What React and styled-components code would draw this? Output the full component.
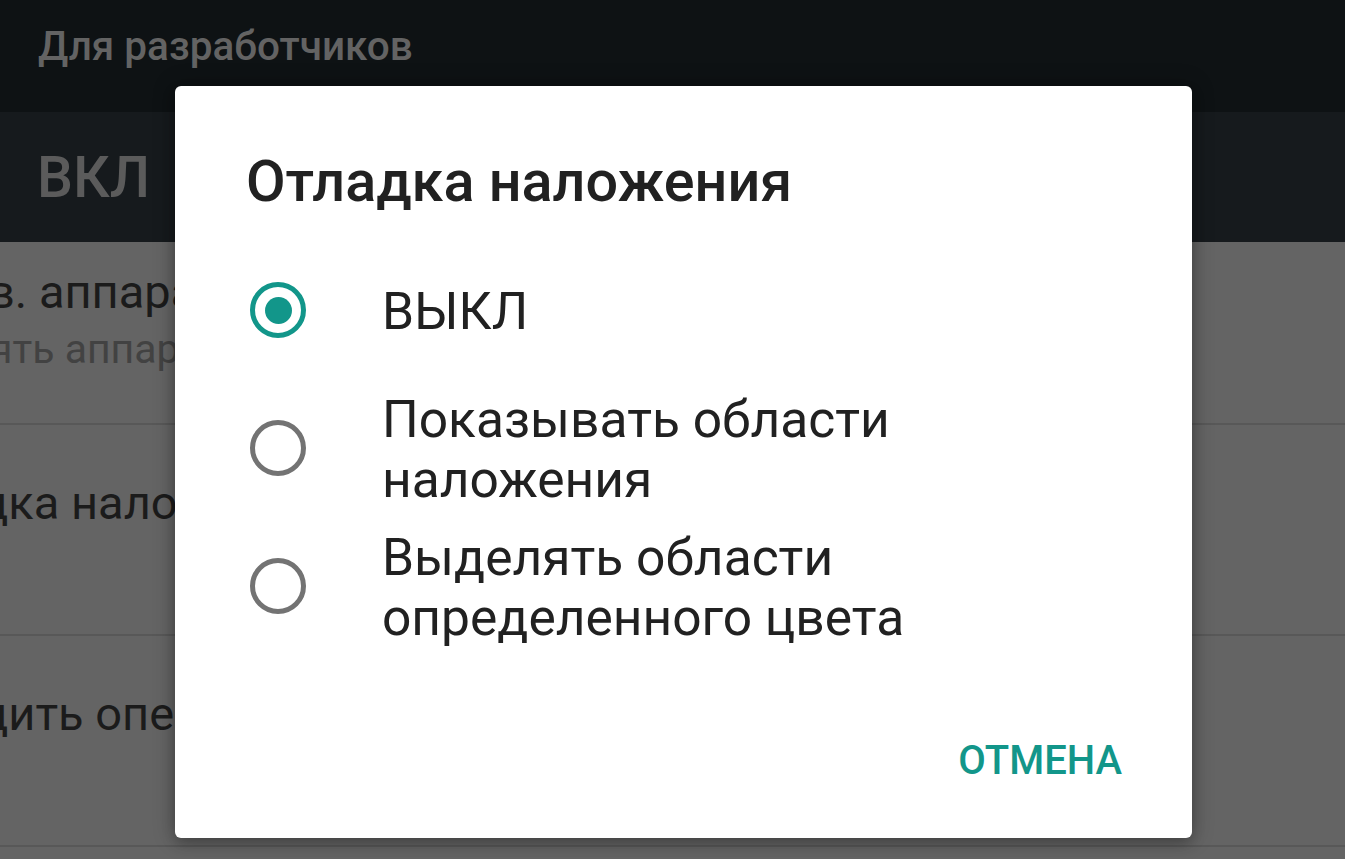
import React from 'react'
import styled, { createGlobalStyle } from 'styled-components'

const GlobalStyle = createGlobalStyle`
  html, body {
    margin: 0;
    padding: 0;
    background: #646464;
  }
  body {
    font-family: Roboto, 'Noto Sans', 'Liberation Sans', sans-serif;
  }
`

const Screen = styled.div`
  position: relative;
  width: 1345px;
  height: 859px;
  overflow: hidden;
  display: flex;
  flex-direction: column;
  background: #646464;
`

const AppBar = styled.header`
  height: 112px;
  flex-shrink: 0;
  background: #0e1214;
  padding: 0 38px;
  box-sizing: border-box;
`

const AppBarTitle = styled.h1`
  margin: 0;
  font-weight: 500;
  font-size: 40.5px;
  line-height: 92px;
  color: #636363;
`

const SwitchBar = styled.div`
  height: 130px;
  flex-shrink: 0;
  background: #161a1d;
  display: flex;
  align-items: center;
  padding: 0 37px;
  box-sizing: border-box;
`

const SwitchLabel = styled.span`
  font-weight: 500;
  font-size: 57px;
  color: #5b5b5b;
`

const Prefs = styled.div`
  flex: 1;
  overflow: hidden;
`

const PrefList = styled.div`
  margin-top: -28px;
`

const Pref = styled.div`
  padding: 49px 0 46px;
  border-bottom: 2px solid #585858;
  white-space: nowrap;
`

const PrefTitle = styled.div`
  font-size: 47px;
  line-height: 58px;
  color: #1b1b1b;
  margin-left: ${p => p.$shift}px;
`

const PrefSummary = styled.div`
  font-size: 41px;
  line-height: 56px;
  min-height: 56px;
  color: #424242;
  margin-left: ${p => p.$shift}px;
`

const Dialog = styled.div`
  position: absolute;
  top: 86px;
  left: 175px;
  width: 1017px;
  height: 752px;
  background: #ffffff;
  border-radius: 6px;
  box-shadow: 0 0 22px rgba(0, 0, 0, 0.28), 0 6px 14px rgba(0, 0, 0, 0.2);
  padding-top: 62px;
  box-sizing: border-box;
  display: flex;
  flex-direction: column;
`

const DialogTitle = styled.h2`
  margin: 0;
  padding: 0 71px;
  font-weight: 500;
  font-size: 57.5px;
  line-height: 68px;
  color: #212121;
`

const Options = styled.div`
  margin-top: 25px;
  display: flex;
  flex-direction: column;
`

const Option = styled.label`
  height: 138px;
  display: grid;
  grid-template-columns: 56px 1fr;
  column-gap: 76px;
  align-items: center;
  padding-left: 75px;
  cursor: pointer;
`

const Radio = styled.span`
  width: 56px;
  height: 56px;
  box-sizing: border-box;
  border-radius: 50%;
  border: 5.5px solid ${p => (p.$checked ? '#12968a' : '#737373')};
  display: flex;
  align-items: center;
  justify-content: center;
  &::after {
    content: '';
    width: 27px;
    height: 27px;
    border-radius: 50%;
    background: #12968a;
    display: ${p => (p.$checked ? 'block' : 'none')};
  }
`

const OptionText = styled.span`
  font-size: 51.5px;
  line-height: 60px;
  color: #212121;
  padding-top: 4px;
`

const Actions = styled.div`
  margin-top: 54px;
  display: flex;
  justify-content: flex-end;
  padding-right: 47px;
`

const TextButton = styled.button`
  height: 103px;
  padding: 0 23px;
  border: none;
  background: transparent;
  font-family: inherit;
  font-weight: 500;
  font-size: 40px;
  color: #12968a;
  cursor: pointer;
`

const prefs = [
  { title: 'в. аппаратное наложение', summary: 'ять аппаратное наложение', shift: -12, sShift: -10 },
  { title: 'дка наложения', summary: '', shift: -20, sShift: 0 },
  { title: 'дить операции отрисовки', summary: '', shift: -20, sShift: 0 },
  { title: 'ировать цветовое пространство', summary: '', shift: -20, sShift: 0 },
]

const options = [
  { label: 'ВЫКЛ', checked: true },
  { label: 'Показывать области\nналожения', checked: false },
  { label: 'Выделять области\nопределенного цвета', checked: false },
]

const App = () => {
  return (
    <Screen>
      <GlobalStyle />
      <AppBar>
        <AppBarTitle>Для разработчиков</AppBarTitle>
      </AppBar>
      <SwitchBar>
        <SwitchLabel>ВКЛ</SwitchLabel>
      </SwitchBar>
      <Prefs>
        <PrefList>
          {prefs.map(p => (
            <Pref key={p.title}>
              <PrefTitle $shift={p.shift}>{p.title}</PrefTitle>
              <PrefSummary $shift={p.sShift}>{p.summary}</PrefSummary>
            </Pref>
          ))}
        </PrefList>
      </Prefs>

      <Dialog>
        <DialogTitle>Отладка наложения</DialogTitle>
        <Options>
          {options.map(o => (
            <Option key={o.label}>
              <Radio $checked={o.checked} />
              <OptionText>
                {o.label.split('\n').map(line => (
                  <div key={line}>{line}</div>
                ))}
              </OptionText>
            </Option>
          ))}
        </Options>
        <Actions>
          <TextButton>ОТМЕНА</TextButton>
        </Actions>
      </Dialog>
    </Screen>
  )
}

export default App
